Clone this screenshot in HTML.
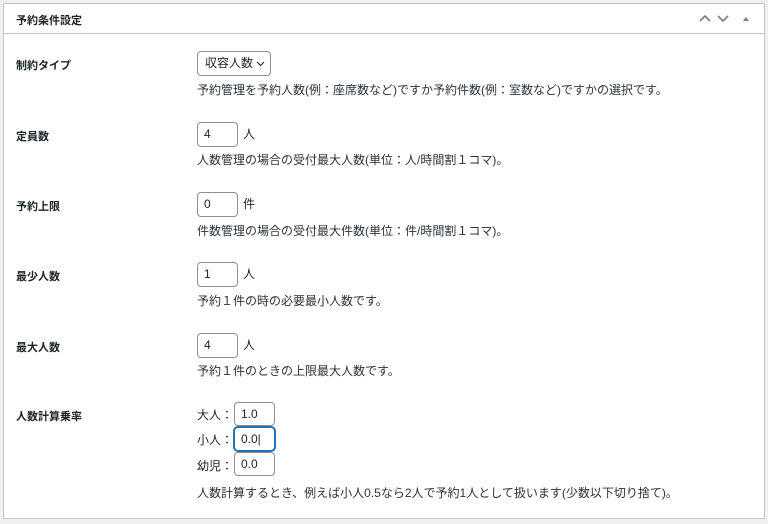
<!DOCTYPE html><html><head><meta charset="utf-8"><style>
body{margin:0;background:#f0f0f1;width:768px;height:524px;overflow:hidden;font-family:"Liberation Sans","Noto Sans CJK JP",sans-serif;font-size:12px;color:#1d2327}
.p{position:absolute;left:3px;top:3px;width:760px;height:514px;background:#fff;border:1px solid #c3c4c7}
.h{position:absolute;left:0;top:0;width:760px;height:29px;border-bottom:1px solid #c3c4c7}
.a{position:absolute}
.lb{position:absolute;left:12px;font-weight:bold;font-size:11px}
.in{position:absolute;border:1px solid #8c8f94;border-radius:4px;background:#fff;box-sizing:border-box;padding-left:6px;font-size:12px;line-height:22px}
.d{position:absolute;left:193px;font-size:12px;color:#2c3338}
</style></head><body><div class="p">
<div class="h"><div class="a" style="left:12px;top:8px;font-weight:bold;font-size:11px">予約条件設定</div>
<svg class="a" style="left:694px;top:9px" width="64" height="12"><path d="M2 8l5-5 5 5M20 3l5 5 5-5" fill="none" stroke="#787c82" stroke-width="1.6"/><path d="M45 8l3-4 3 4z" fill="#787c82"/></svg></div>
<div class="lb" style="top:53px">制約タイプ</div>
<div class="in" style="left:193px;top:47px;width:74px;height:25px;line-height:23px;padding-left:7px">収容人数 <svg width="9" height="6"><path d="M1 1l3.5 3.5L8 1" fill="none" stroke="#2c3338" stroke-width="1.2"/></svg></div>
<div class="d" style="top:77px">予約管理を予約人数(例：座席数など)ですか予約件数(例：室数など)ですかの選択です。</div>
<div class="lb" style="top:124px">定員数</div>
<div class="in" style="left:193px;top:118px;width:41px;height:25px">4</div><div class="a" style="left:239px;top:121px">人</div>
<div class="d" style="top:147px">人数管理の場合の受付最大人数(単位：人/時間割１コマ)。</div>
<div class="lb" style="top:194px">予約上限</div>
<div class="in" style="left:193px;top:188px;width:41px;height:25px">0</div><div class="a" style="left:239px;top:191px">件</div>
<div class="d" style="top:218px">件数管理の場合の受付最大件数(単位：件/時間割１コマ)。</div>
<div class="lb" style="top:264px">最少人数</div>
<div class="in" style="left:193px;top:258px;width:41px;height:25px">1</div><div class="a" style="left:239px;top:261px">人</div>
<div class="d" style="top:288px">予約１件の時の必要最小人数です。</div>
<div class="lb" style="top:335px">最大人数</div>
<div class="in" style="left:193px;top:329px;width:41px;height:25px">4</div><div class="a" style="left:239px;top:332px">人</div>
<div class="d" style="top:358px">予約１件のときの上限最大人数です。</div>
<div class="lb" style="top:404px">人数計算乗率</div>
<div class="a" style="left:193px;top:402px">大人：</div><div class="in" style="left:230px;top:398px;width:41px;height:24px">1.0</div>
<div class="a" style="left:193px;top:427px">小人：</div><div class="in" style="left:230px;top:423px;width:41px;height:24px;border:1.5px solid #2271b1;box-shadow:0 0 0 1px #2271b1">0.0|</div>
<div class="a" style="left:193px;top:453px">幼児：</div><div class="in" style="left:230px;top:448px;width:41px;height:24px">0.0</div>
<div class="d" style="top:480px">人数計算するとき、例えば小人0.5なら2人で予約1人として扱います(少数以下切り捨て)。</div>
</div></body></html>
